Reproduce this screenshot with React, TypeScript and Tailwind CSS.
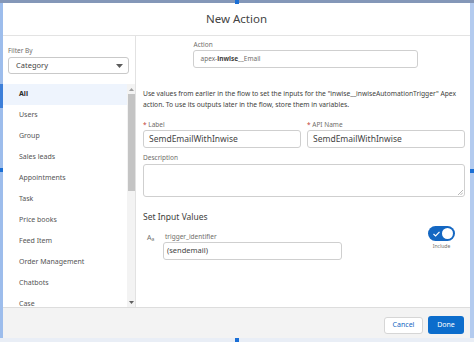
import React from "react";

const items = [
  "All",
  "Users",
  "Group",
  "Sales leads",
  "Appointments",
  "Task",
  "Price books",
  "Feed Item",
  "Order Management",
  "Chatbots",
  "Case",
];

function Caret({ className = "" }: { className?: string }) {
  return (
    <svg width="7" height="4" viewBox="0 0 7 4" className={className}>
      <path d="M0 0 L7 0 L3.5 4 Z" fill="#5c5c5c" />
    </svg>
  );
}

export default function App() {
  return (
    <div className="relative w-[474px] h-[342px] overflow-hidden bg-white flex flex-col font-['Noto_Sans',sans-serif] text-[#3e3e3c]">
      <div className="h-[3px] shrink-0 bg-[#8497b8]" />
      <div className="flex flex-1 min-h-0">
        <div className="w-[3px] shrink-0 bg-[#9dbdec] relative">
          <div className="absolute left-0 top-[81px] w-[3px] h-[24px] bg-[#3d7fd9]" />
        </div>
        <div className="flex-1 min-w-0 flex flex-col">
          {/* Header */}
          <div className="h-[33px] shrink-0 border-b border-[#e3e3e3] flex items-center justify-center text-[11.5px] text-[#444444]">
            New Action
          </div>
          {/* Body */}
          <div className="flex flex-1 min-h-0">
            {/* Left panel */}
            <div className="w-[133px] shrink-0 border-r border-[#e2e2e2] flex flex-col">
              <div className="pt-[10px] px-[5px]">
                <div className="text-[6.5px] leading-[10px] text-[#706e6b]">Filter By</div>
                <div className="mt-[1px] h-[17px] w-[121px] border border-[#c9c9c9] rounded-[3px] flex items-center justify-between pl-[7px] pr-[5px] text-[7.5px] text-[#444444]">
                  <span>Category</span>
                  <Caret />
                </div>
              </div>
              <div className="mt-[10px] flex-1 min-h-0 flex overflow-hidden">
                <div className="flex-1 min-w-0">
                  {items.map((it, i) => (
                    <div
                      key={it}
                      className={
                        i === 0
                          ? "h-[21px] flex items-center pl-[16px] text-[7px] font-bold bg-[#eef4fd] text-[#2b2b2b]"
                          : "h-[21px] flex items-center pl-[16px] text-[7px] text-[#555555]"
                      }
                    >
                      {it}
                    </div>
                  ))}
                </div>
                <div className="w-[8px] shrink-0 bg-[#f3f3f3] flex flex-col items-center">
                  <div className="h-[10px] flex items-center justify-center">
                    <svg width="5" height="3" viewBox="0 0 5 3">
                      <path d="M0 3 L5 3 L2.5 0 Z" fill="#a0a0a0" />
                    </svg>
                  </div>
                  <div className="w-[7px] h-[97px] bg-[#c4c4c4]" />
                  <div className="flex-1" />
                  <div className="h-[10px] flex items-center justify-center">
                    <svg width="5" height="3" viewBox="0 0 5 3">
                      <path d="M0 0 L5 0 L2.5 3 Z" fill="#606060" />
                    </svg>
                  </div>
                </div>
              </div>
            </div>
            {/* Right panel */}
            <div className="flex-1 min-w-0 pl-[7px] pr-[5px]">
              <div className="pt-[4px] flex justify-center">
                <div className="w-[225px] ml-[2px]">
                  <div className="text-[6.5px] leading-[10px] text-[#706e6b] pl-[1px]">Action</div>
                  <div className="h-[18px] border border-[#cfcfcf] rounded-[3px] flex items-center pl-[7px] text-[6.5px] text-[#706e6b]">
                    apex-<span className="font-bold text-[#3e3e3c]">inwise</span>__Email
                  </div>
                </div>
              </div>
              <p className="mt-[21px] text-[6.7px] leading-[10.5px] text-[#3e3e3c] whitespace-nowrap">
                Use values from earlier in the flow to set the inputs for the "inwise__inwiseAutomationTrigger" Apex
                <br />
                action. To use its outputs later in the flow, store them in variables.
              </p>
              <div className="mt-[10px] grid grid-cols-2 gap-[6px]">
                <div>
                  <div className="text-[6.5px] leading-[10px] text-[#706e6b]">
                    <span className="text-[#c23934]">*</span> Label
                  </div>
                  <div className="h-[18px] border border-[#cfcfcf] rounded-[3px] flex items-center pl-[5px] text-[8.5px] text-[#444444]">
                    SemdEmailWithInwise
                  </div>
                </div>
                <div>
                  <div className="text-[6.5px] leading-[10px] text-[#706e6b]">
                    <span className="text-[#c23934]">*</span> API Name
                  </div>
                  <div className="h-[18px] border border-[#cfcfcf] rounded-[3px] flex items-center pl-[5px] text-[8.5px] text-[#444444]">
                    SemdEmailWithInwise
                  </div>
                </div>
              </div>
              <div className="mt-[5px] text-[6.5px] leading-[10px] text-[#706e6b]">Description</div>
              <div className="mt-[1px] h-[33px] border border-[#cfcfcf] rounded-[3px] relative">
                <svg width="5" height="5" viewBox="0 0 5 5" className="absolute right-[1px] bottom-[1px]">
                  <path d="M5 0 L0 5 M5 2.5 L2.5 5" stroke="#9a9a9a" strokeWidth="0.7" />
                </svg>
              </div>
              <div className="mt-[14px] text-[8.5px] leading-[12px] text-[#3e3e3c]">Set Input Values</div>
              <div className="mt-[9px] flex items-start">
                <div className="flex pl-[4px]">
                  <div className="w-[20px] pt-[1px] text-[7px] leading-[10px] text-[#706e6b]">
                    A<sub className="text-[5px]">a</sub>
                  </div>
                  <div className="w-[179px] -ml-[4px]">
                    <div className="text-[6.5px] leading-[10px] text-[#706e6b] pl-[2px]">trigger_identifier</div>
                    <div className="h-[18px] border border-[#cfcfcf] rounded-[3px] flex items-center pl-[3px] text-[7.5px] text-[#444444]">
                      (sendemail)
                    </div>
                  </div>
                </div>
                <div className="ml-auto mr-[10px] -mt-[6px] flex flex-col items-center">
                  <div className="w-[27px] h-[15px] rounded-full bg-[#1467c2] relative">
                    <svg width="7" height="6" viewBox="0 0 7 6" className="absolute left-[5px] top-[4.5px]">
                      <path d="M0.5 3 L2.6 5 L6.5 0.8" stroke="white" strokeWidth="1.2" fill="none" />
                    </svg>
                    <div className="absolute right-[2px] top-[2px] w-[11px] h-[11px] rounded-full bg-white" />
                  </div>
                  <div className="text-[5px] leading-[8px] mt-[1px] text-[#706e6b]">Include</div>
                </div>
              </div>
            </div>
          </div>
          {/* Footer */}
          <div className="h-[31px] shrink-0 bg-[#f3f3f3] border-t border-[#dddddd] flex items-start justify-end gap-[5px] pr-[6px] pt-[8px]">
            <div className="w-[39px] h-[17px] mt-[1px] bg-white border border-[#d6d6d6] rounded-[3px] flex items-center justify-center text-[7px] text-[#1467c2]">
              Cancel
            </div>
            <div className="w-[36px] h-[18px] bg-[#0c6dcc] rounded-[3px] flex items-center justify-center text-[7px] text-white">
              Done
            </div>
          </div>
        </div>
        <div className="w-[4px] shrink-0 bg-[#b3cbef]" />
      </div>
      <div className="h-[4px] shrink-0 bg-[#e9eef6]" />
      {/* selection handles */}
      <div className="absolute left-[235px] top-0 w-[4px] h-[4px] bg-[#1a6fd6]" />
      <div className="absolute left-0 top-[168px] w-[3px] h-[4px] bg-[#1a6fd6]" />
      <div className="absolute right-0 top-[169px] w-[4px] h-[4px] bg-[#1a6fd6]" />
      <div className="absolute left-[235px] bottom-0 w-[4px] h-[4px] bg-[#1a6fd6]" />
    </div>
  );
}
